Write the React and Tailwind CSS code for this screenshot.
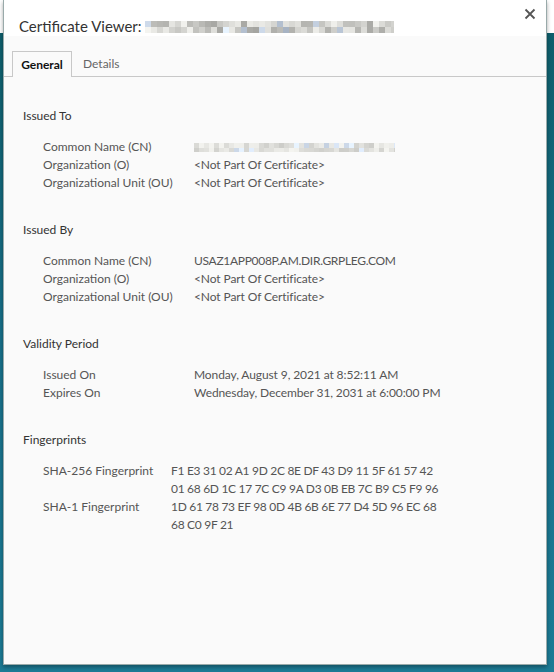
import React from "react";

const font = { fontFamily: "Lato, 'Noto Sans', sans-serif" };

// pixelated (redacted) text blur
function Mosaic({ width, height, cell = 6, seed = 7, light = false }) {
  const cols = Math.ceil(width / cell);
  const rows = Math.ceil(height / cell);
  let s = seed;
  const rnd = () => {
    s = (s * 9301 + 49297) % 233280;
    return s / 233280;
  };
  const rects = [];
  for (let r = 0; r < rows; r++) {
    for (let c = 0; c < cols; c++) {
      const v = rnd();
      let g = light ? 205 + Math.floor(v * 40) : 165 + Math.floor(v * 80);
      const tint = rnd() > 0.85;
      const fill = tint
        ? `rgb(${g - 10},${g + 2},${Math.min(255, g + 18)})`
        : `rgb(${g},${g},${g - 4})`;
      rects.push(
        <rect key={r + "-" + c} x={c * cell} y={r * cell} width={cell} height={cell} fill={fill} />
      );
    }
  }
  return (
    <svg width={width} height={height} className="block">
      {rects}
    </svg>
  );
}

function Row({ label, value, valueX = 151, tight = false }) {
  return (
    <div className="flex h-[18px] items-center">
      <div className="shrink-0 text-[#555]" style={{ width: valueX }}>
        {label}
      </div>
      <div className={tight ? "tracking-[-0.3px] text-[#555]" : "tracking-[-0.1px] text-[#555]"}>
        {value}
      </div>
    </div>
  );
}

function Section({ title, children }) {
  return (
    <div className="mb-[29px]">
      <div className="flex h-[18px] items-center text-[#333]">{title}</div>
      <div className="mt-[13px] pl-5">{children}</div>
    </div>
  );
}

export default function App() {
  const none = "<Not Part Of Certificate>";
  return (
    <div
      className="relative h-[672px] w-[554px] overflow-hidden bg-gradient-to-b from-[#0d5c68] via-[#17708a] to-[#1c7b95]"
      style={font}
    >
      <div className="h-[33px] bg-white" />
      <div className="absolute left-[3px] top-0 flex h-[665px] w-[544px] flex-col border-x border-b border-[#9aa] bg-[#fafafa] shadow-[0_2px_4px_rgba(0,0,0,0.35)]">
        {/* title bar */}
        <div className="relative flex h-[36px] items-end bg-white pb-[2px] pl-[15px]">
          <span className="text-[15px] leading-none text-[#333]">Certificate Viewer:&nbsp;</span>
          <div className="mb-[1px]">
            <Mosaic width={249} height={12} cell={6} seed={11} />
          </div>
          <button className="absolute right-[10px] top-[8px] flex h-3 w-3 items-center justify-center">
            <svg width="12" height="12" viewBox="0 0 12 12">
              <path d="M1.5 1.5 L10.5 10.5 M10.5 1.5 L1.5 10.5" stroke="#555" strokeWidth="1.8" />
            </svg>
          </button>
        </div>

        {/* tabs */}
        <div className="flex h-[41px] items-end border-b border-[#c8c8c8] pl-[8px]">
          <div className="mb-[-1px] flex h-[26px] w-[60px] items-center justify-center border border-b-0 border-[#c8c8c8] bg-[#fafafa] text-[12px] font-bold text-[#111]">
            General
          </div>
          <div className="flex h-[25px] items-center pl-[11px] text-[12px] text-[#666]">Details</div>
        </div>

        {/* content */}
        <div className="flex-1 pl-[19px] pt-[30px] text-[12px]">
          <Section title="Issued To">
            <Row
              label="Common Name (CN)"
              value={<Mosaic width={201} height={9} cell={5} seed={3} light />}
            />
            <Row label="Organization (O)" value={none} />
            <Row label="Organizational Unit (OU)" value={none} />
          </Section>

          <Section title="Issued By">
            <Row tight label="Common Name (CN)" value="USAZ1APP008P.AM.DIR.GRPLEG.COM" />
            <Row label="Organization (O)" value={none} />
            <Row label="Organizational Unit (OU)" value={none} />
          </Section>

          <Section title="Validity Period">
            <Row label="Issued On" value="Monday, August 9, 2021 at 8:52:11 AM" />
            <Row label="Expires On" value="Wednesday, December 31, 2031 at 6:00:00 PM" />
          </Section>

          <Section title="Fingerprints">
            <Row tight valueX={128} label="SHA-256 Fingerprint" value="F1 E3 31 02 A1 9D 2C 8E DF 43 D9 11 5F 61 57 42" />
            <Row tight valueX={128} label="" value="01 68 6D 1C 17 7C C9 9A D3 0B EB 7C B9 C5 F9 96" />
            <Row tight valueX={128} label="SHA-1 Fingerprint" value="1D 61 78 73 EF 98 0D 4B 6B 6E 77 D4 5D 96 EC 68" />
            <Row tight valueX={128} label="" value="68 C0 9F 21" />
          </Section>
        </div>
      </div>
    </div>
  );
}
